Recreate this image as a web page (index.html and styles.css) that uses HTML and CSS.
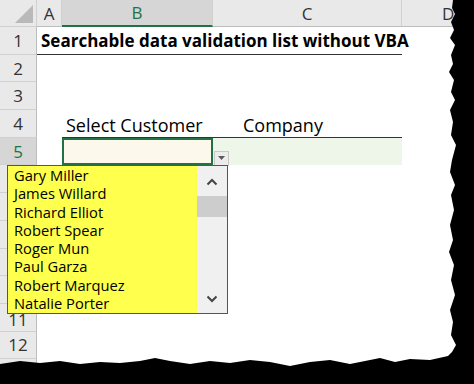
FILE: index.html
```html
<!DOCTYPE html>
<html>
<head>
<meta charset="utf-8">
<link rel="stylesheet" href="styles.css">
</head>
<body>
<div class="page">
  <div class="sheet">
    <div class="hd corner"><svg class="tri" width="20" height="20" viewBox="0 0 20 20"><polygon points="19,1 19,19 1,19" fill="#b9b9b9"/></svg></div>
    <div class="hd col">A</div>
    <div class="hd col sel-col">B</div>
    <div class="hd col">C</div>
    <div class="hd col last">D</div>

    <div class="hd row">1</div>
    <div class="cell title-cell"><span class="title">Searchable data validation list without VBA</span></div>
    <div class="cell b1 ul"></div>
    <div class="cell ul"></div>
    <div class="cell"></div>

    <div class="hd row">2</div>
    <div class="cell"></div><div class="cell"></div><div class="cell"></div><div class="cell"></div>

    <div class="hd row">3</div>
    <div class="cell"></div><div class="cell"></div><div class="cell"></div><div class="cell"></div>

    <div class="hd row">4</div>
    <div class="cell"></div>
    <div class="cell lbl ul b4">Select Customer</div>
    <div class="cell lbl ul c4">Company</div>
    <div class="cell"></div>

    <div class="hd row sel-row">5</div>
    <div class="cell"></div>
    <div class="cell active"><span class="dd-btn"><svg width="7" height="4" viewBox="0 0 7 4"><polygon points="0,0 7,0 3.5,4" fill="#5a5a5a"/></svg></span></div>
    <div class="cell green"></div>
    <div class="cell"></div>

    <div class="hd row"></div><div class="cell"></div><div class="cell"></div><div class="cell"></div><div class="cell"></div>
    <div class="hd row"></div><div class="cell"></div><div class="cell"></div><div class="cell"></div><div class="cell"></div>
    <div class="hd row"></div><div class="cell"></div><div class="cell"></div><div class="cell"></div><div class="cell"></div>
    <div class="hd row"></div><div class="cell"></div><div class="cell"></div><div class="cell"></div><div class="cell"></div>
    <div class="hd row"></div><div class="cell"></div><div class="cell"></div><div class="cell"></div><div class="cell"></div>
    <div class="hd row r11">11</div><div class="cell"></div><div class="cell"></div><div class="cell"></div><div class="cell"></div>
    <div class="hd row">12</div><div class="cell"></div><div class="cell"></div><div class="cell"></div><div class="cell"></div>
    <div class="hd row"></div><div class="cell"></div><div class="cell"></div><div class="cell"></div><div class="cell"></div>
  </div>

  <div class="dropdown">
    <ul class="items">
      <li>Gary Miller</li>
      <li>James Willard</li>
      <li>Richard Elliot</li>
      <li>Robert Spear</li>
      <li>Roger Mun</li>
      <li>Paul Garza</li>
      <li>Robert Marquez</li>
      <li>Natalie Porter</li>
    </ul>
    <div class="scrollbar">
      <svg class="arrow" width="12" height="8" viewBox="0 0 12 8"><polyline points="1.5,6.5 6,2 10.5,6.5" fill="none" stroke="#444" stroke-width="2"/></svg>
      <div class="thumb"></div>
      <div class="track"></div>
      <svg class="arrow" width="12" height="8" viewBox="0 0 12 8"><polyline points="1.5,1.5 6,6 10.5,1.5" fill="none" stroke="#444" stroke-width="2"/></svg>
    </div>
  </div>

  <svg class="torn" width="474" height="384" viewBox="0 0 474 384">
    <polygon fill="#000" points="474,0 453,0 452,8 455,14 451,22 454,30 450,38 455,45 451,55 453,64 449,72 454,80 451,92 455,100 450,110 453,122 451,135 456,145 452,160 450,172 455,185 451,195 454,210 450,225 453,240 449,252 454,265 451,280 455,295 450,310 453,322 451,335 456,345 452,352 448,356 430,360 410,359 395,362 380,358 365,361 350,364 330,360 310,362 290,366 270,362 250,360 230,363 210,361 190,364 170,361 155,358 140,361 120,363 100,362 80,364 60,361 40,363 20,361 0,364 0,384 474,384"/>
  </svg>
</div>
</body>
</html>
```

FILE: styles.css
```css
* { box-sizing: border-box; }
html, body { margin: 0; padding: 0; background: #fff; }
.page {
  position: relative;
  width: 474px;
  height: 384px;
  overflow: hidden;
  font-family: "Open Sans", "Noto Sans", sans-serif;
  color: #000;
}
.sheet {
  display: grid;
  grid-template-columns: 37px 25px 151px 189px 72px;
  grid-template-rows: 27px;
  grid-auto-rows: 27.7px;
}
.hd {
  background: #e9e9e9;
  color: #333;
  font-size: 17px;
  line-height: 1;
  display: flex;
  align-items: center;
  justify-content: center;
  border-right: 1px solid #d0d0d0;
  border-bottom: 1px solid #d0d0d0;
}
.corner { position: relative; justify-content: flex-end; align-items: flex-end; padding: 0 2px 2px 0; }
.col { border-bottom: 1px solid #bdbdbd; }
.col.last { justify-content: flex-start; padding-left: 40px; border-right: none; }
.sel-col { background: #d6d6d6; color: #217346; border-bottom: 2px solid #217346; }
.row { border-right: 1px solid #bdbdbd; }
.r11 { padding-top: 4px; }
.sel-row { background: #d6d6d6; color: #217346; }
.cell { position: relative; background: #fff; }
.title-cell { overflow: visible; white-space: nowrap; display: flex; align-items: center; border-bottom: 1px solid #333; z-index: 1; }
.title { font-weight: 700; font-size: 17px; padding-left: 4px; position: relative; }
.ul { border-bottom: 1px solid #333; }
.lbl { display: flex; align-items: flex-end; font-size: 18px; line-height: 24px; padding-bottom: 0; white-space: nowrap; }
.b4 { padding-left: 4px; }
.c4 { padding-left: 30px; }
.active { background: #fdf8ec; border: 2px solid #217346; }
.green { background: #eef5e9; }
.dd-btn {
  position: absolute;
  right: -18px;
  top: 11px;
  width: 15px;
  height: 15px;
  background: #ececec;
  border: 1px solid #c8c8c8;
  display: flex;
  align-items: center;
  justify-content: center;
  z-index: 2;
}
.dropdown {
  position: absolute;
  left: 7px;
  top: 165px;
  width: 221px;
  height: 149px;
  border: 1px solid #555;
  display: flex;
  background: #ffff4d;
  z-index: 3;
}
.items {
  list-style: none;
  margin: 0;
  padding: 0 0 0 6px;
  flex: 1;
  font-size: 14.7px;
  line-height: 18.3px;
}
.items li { white-space: nowrap; }
.scrollbar {
  width: 30px;
  background: #f0f0f0;
  display: flex;
  flex-direction: column;
  align-items: center;
}
.arrow { margin: 12px 0 10px; flex: none; }
.scrollbar .arrow:last-child { margin: 10px 0 10px; }
.thumb { width: 100%; height: 21px; background: #cdcdcd; flex: none; }
.track { flex: 1; }
.torn { position: absolute; left: 0; top: 0; z-index: 10; }
```
